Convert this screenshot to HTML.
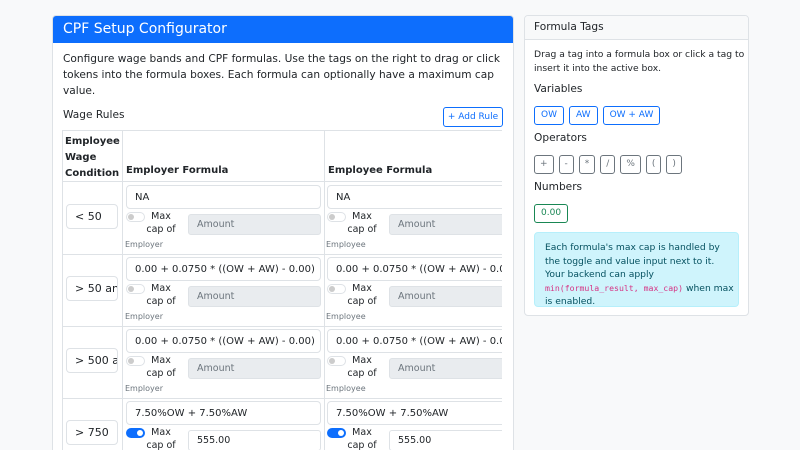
<!DOCTYPE html>
<html><head><meta charset="utf-8"><style>
*{box-sizing:border-box;margin:0;padding:0}
html,body{width:800px;height:450px;overflow:hidden}
body{background:#f8f9fa;font-family:"DejaVu Sans","Liberation Sans",sans-serif;color:#212529;position:relative}
.a{position:absolute}
.card{position:absolute;background:#fff;border:1px solid #dee2e6;border-radius:4px;overflow:hidden}
.inp{position:absolute;border:1px solid #dee2e6;border-radius:4px;background:#fff;font-size:10px;padding-left:8px;display:flex;align-items:center;white-space:nowrap;overflow:hidden}
.amt{position:absolute;border-radius:3px;background:#e9ecef;border:1px solid #dee2e6;font-size:9.5px;color:#6c757d;padding-left:8px;display:flex;align-items:center}
.amt.on{background:#fff;color:#212529}
.tg{position:absolute;width:19px;height:10px;border-radius:5px;border:1px solid #dee2e6;background:#fff}
.tg::after{content:"";position:absolute;left:1px;top:1px;width:6px;height:6px;border-radius:50%;background:#ccc}
.tg.on{background:#0d6efd;border-color:#0d6efd}
.tg.on::after{left:10px;background:#fff}
.mx{position:absolute;font-size:9.5px;line-height:13px;text-align:center;width:40px;white-space:nowrap}
.lb{position:absolute;font-size:8px;color:#6c757d}
.tag{display:inline-block;border:1px solid;border-radius:3px;font-size:9px;height:19px;line-height:17px;padding:0 6px;margin-right:5px}
</style></head><body>
<div class="card" style="left:52px;top:15px;width:462px;height:445px">
 <div class="a" style="left:0;top:0;width:100%;height:27px;background:#0d6efd;color:#fff;font-size:14px;line-height:27px;padding-left:10px">CPF Setup Configurator</div>
 <div class="a" style="left:10px;top:35px;width:448px;font-size:10.6px;line-height:16px">Configure wage bands and CPF formulas. Use the tags on the right to drag or click tokens into the formula boxes. Each formula can optionally have a maximum cap value.</div>
 <div class="a" style="left:10px;top:93px;font-size:10.6px">Wage Rules</div>
 <div class="a" style="left:390px;top:91px;width:60px;height:20px;border:1px solid #0d6efd;border-radius:3px;color:#0d6efd;font-size:9px;text-align:center;line-height:18px;white-space:nowrap">+ Add Rule</div>
</div>
<div id="tbl" class="a" style="left:62px;top:130px;width:440px;height:320px;overflow:hidden;background:#fff">
 <div class="a" style="left:0;top:0;width:600px;height:52px;background:#fff;border:1px solid #dee2e6"></div>
 <div class="a" style="left:60px;top:0;width:1px;height:320px;background:#dee2e6"></div>
 <div class="a" style="left:262px;top:0;width:1px;height:320px;background:#dee2e6"></div>
 <div class="a" style="left:0;top:0;width:1px;height:320px;background:#dee2e6"></div>
 <div class="a" style="left:3px;top:4px;font-size:10px;font-weight:bold;line-height:16px">Employee<br>Wage<br>Condition</div>
 <div class="a" style="left:64px;top:35px;font-size:10px;font-weight:bold">Employer Formula</div>
 <div class="a" style="left:266px;top:35px;font-size:10px;font-weight:bold">Employee Formula</div>
 <div class="a" style="left:0;top:124px;width:600px;height:1px;background:#dee2e6"></div>
 <div class="a" style="left:0;top:196px;width:600px;height:1px;background:#dee2e6"></div>
 <div class="a" style="left:0;top:268px;width:600px;height:1px;background:#dee2e6"></div>
</div>
<script>
const rows=[["< 50","NA",0],["> 50 an","0.00 + 0.0750 * ((OW + AW) - 0.00)",0],["> 500 a","0.00 + 0.0750 * ((OW + AW) - 0.00)",0],["> 750","7.50%OW + 7.50%AW",1]];
let h='';
rows.forEach((r,i)=>{const t=52+i*72;
h+=`<div class="inp" style="left:4px;top:${t+22}px;width:52px;height:25px;font-size:11px">${r[0].replace('<','&lt;')}</div>`;
[[64,'Employer'],[265,'Employee']].forEach(c=>{const x=c[0];
h+=`<div class="inp" style="left:${x}px;top:${t+3}px;width:195px;height:24px">${r[1]}</div>`;
h+=`<div class="tg${r[2]?' on':''}" style="left:${x}px;top:${t+30}px"></div>`;
h+=`<div class="mx" style="left:${x+15}px;top:${t+28}px">Max<br>cap of</div>`;
h+=`<div class="amt${r[2]?' on':''}" style="left:${x+62}px;top:${t+32}px;width:133px;height:21px">${r[2]?'555.00':'Amount'}</div>`;
h+=`<div class="lb" style="left:${x-1}px;top:${t+58}px">${c[1]}</div>`;});});
document.getElementById('tbl').insertAdjacentHTML('beforeend',h);
</script>
<div class="card" style="left:524px;top:15px;width:225px;height:301px">
 <div class="a" style="left:0;top:0;width:100%;height:24px;background:#f8f9fa;border-bottom:1px solid #dee2e6;font-size:10.6px;line-height:23px;padding-left:9px">Formula Tags</div>
 <div class="a" style="left:9px;top:32px;width:215px;font-size:9.2px;line-height:14px">Drag a tag into a formula box or click a tag to insert it into the active box.</div>
 <div class="a" style="left:9px;top:67px;font-size:10.6px">Variables</div>
 <div class="a" style="left:9px;top:86px;color:#0d6efd;white-space:nowrap"><span class="tag">OW</span><span class="tag">AW</span><span class="tag">OW + AW</span></div>
 <div class="a" style="left:9px;top:116px;font-size:10.6px">Operators</div>
 <div class="a" style="left:9px;top:135px;color:#6c757d;white-space:nowrap"><span class="tag" style="padding:0 5px">+</span><span class="tag" style="padding:0 5px">-</span><span class="tag" style="padding:0 5px">*</span><span class="tag" style="padding:0 5px">/</span><span class="tag" style="padding:0 5px">%</span><span class="tag" style="padding:0 5px">(</span><span class="tag" style="padding:0 5px">)</span></div>
 <div class="a" style="left:9px;top:165px;font-size:10.6px">Numbers</div>
 <div class="a" style="left:9px;top:184px;color:#198754"><span class="tag">0.00</span></div>
 <div class="a" style="left:9px;top:216px;width:205px;height:75px;background:#cff4fc;border:1px solid #b6effb;border-radius:4px;color:#055160;font-size:9.2px;line-height:13.5px;padding:8px 2px 8px 10px">Each formula's max cap is handled by the toggle and value input next to it. Your backend can apply <span style="font-family:'DejaVu Sans Mono',monospace;color:#d63384;font-size:8.2px">min(formula_result, max_cap)</span> when max is enabled.</div>
</div>
</body></html>
